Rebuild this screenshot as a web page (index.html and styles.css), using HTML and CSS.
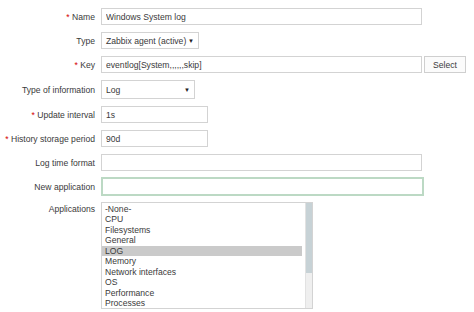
FILE: index.html
```html
<!DOCTYPE html>
<html lang="en">
<head>
    <meta charset="UTF-8" />
    <meta name="viewport" content="width=device-width, initial-scale=1.0" />
    <title>Item</title>
    <link rel="stylesheet" href="styles.css">
</head>
<body>
    <form class="item-form">
        <div class="form-row">
            <label class="form-label"><span class="req">*</span> Name</label>
            <div class="form-field">
                <input type="text" class="text-input input-long" value="Windows System log" />
            </div>
        </div>
        <div class="form-row">
            <label class="form-label">Type</label>
            <div class="form-field">
                <div class="select select-type"><span>Zabbix agent (active)</span><span class="arrow">&#9660;</span></div>
            </div>
        </div>
        <div class="form-row">
            <label class="form-label"><span class="req">*</span> Key</label>
            <div class="form-field">
                <input type="text" class="text-input input-long" value="eventlog[System,,,,,,skip]" />
                <button type="button" class="btn-select">Select</button>
            </div>
        </div>
        <div class="form-row">
            <label class="form-label">Type of information</label>
            <div class="form-field">
                <div class="select select-info"><span>Log</span><span class="arrow">&#9660;</span></div>
            </div>
        </div>
        <div class="form-row">
            <label class="form-label"><span class="req">*</span> Update interval</label>
            <div class="form-field">
                <input type="text" class="text-input input-short" value="1s" />
            </div>
        </div>
        <div class="form-row">
            <label class="form-label"><span class="req">*</span> History storage period</label>
            <div class="form-field">
                <input type="text" class="text-input input-short" value="90d" />
            </div>
        </div>
        <div class="form-row">
            <label class="form-label">Log time format</label>
            <div class="form-field">
                <input type="text" class="text-input input-long" value="" />
            </div>
        </div>
        <div class="form-row">
            <label class="form-label">New application</label>
            <div class="form-field">
                <input type="text" class="text-input input-long input-focus" value="" />
            </div>
        </div>
        <div class="form-row row-top">
            <label class="form-label">Applications</label>
            <div class="form-field">
                <div class="listbox">
                    <ul class="listbox-items">
                        <li>-None-</li>
                        <li>CPU</li>
                        <li>Filesystems</li>
                        <li>General</li>
                        <li class="selected">LOG</li>
                        <li>Memory</li>
                        <li>Network interfaces</li>
                        <li>OS</li>
                        <li>Performance</li>
                        <li>Processes</li>
                    </ul>
                    <div class="scrollbar"><div class="scroll-thumb"></div></div>
                </div>
            </div>
        </div>
    </form>
</body>
</html>
```

FILE: styles.css
```css
* {
    margin: 0;
    padding: 0;
    box-sizing: border-box;
}

body {
    font-family: "Liberation Sans", Arial, sans-serif;
    font-size: 8.6px;
    color: #3a3a3a;
    background-color: #fff;
    width: 474px;
    height: 312px;
    overflow: hidden;
}

.item-form {
    display: flex;
    flex-direction: column;
    gap: 7px;
    padding-top: 8px;
}

.form-row {
    display: flex;
    align-items: center;
    gap: 6px;
}

.form-row.row-top {
    align-items: flex-start;
}

.form-label {
    width: 95px;
    text-align: right;
    white-space: nowrap;
}

.row-top .form-label {
    padding-top: 2px;
}

.req {
    color: #d40000;
}

.form-field {
    display: flex;
    align-items: center;
    gap: 2px;
}

.text-input {
    height: 17px;
    border: 1px solid #d3d3d3;
    padding: 0 4px;
    font-family: inherit;
    font-size: 8.6px;
    color: #3a3a3a;
    background-color: #fff;
    outline: none;
}

.input-long {
    width: 321px;
}

.input-short {
    width: 107px;
}

.input-focus {
    border: 2px solid #bcd9c4;
    width: 323px;
    height: 19px;
    margin-top: -1px;
    margin-bottom: -1px;
}

.select {
    height: 17px;
    border: 1px solid #d3d3d3;
    padding: 0 4px;
    display: flex;
    align-items: center;
    justify-content: space-between;
    background-color: #fff;
}

.select .arrow {
    font-size: 6px;
    color: #222;
}

.select-type {
    width: 98px;
}

.select-info {
    width: 94px;
    height: 19px;
}

.btn-select {
    width: 42px;
    height: 17px;
    border: 1px solid #cfcfcf;
    background-color: #fbfbfb;
    font-family: inherit;
    font-size: 8.6px;
    color: #3a3a3a;
}

.listbox {
    width: 212px;
    height: 107px;
    border: 1px solid #d3d3d3;
    display: flex;
    background-color: #fff;
}

.listbox-items {
    list-style: none;
    flex: 1;
    padding-top: 0.5px;
}

.listbox-items li {
    height: 10.5px;
    line-height: 10.5px;
    padding-left: 3px;
}

.listbox-items li.selected {
    background-color: #cacaca;
    margin-right: 3px;
}

.scrollbar {
    width: 7px;
    background-color: #efefef;
    border-left: 1px solid #e2e2e2;
}

.scroll-thumb {
    height: 70px;
    background-color: #c7d2d6;
}
```
